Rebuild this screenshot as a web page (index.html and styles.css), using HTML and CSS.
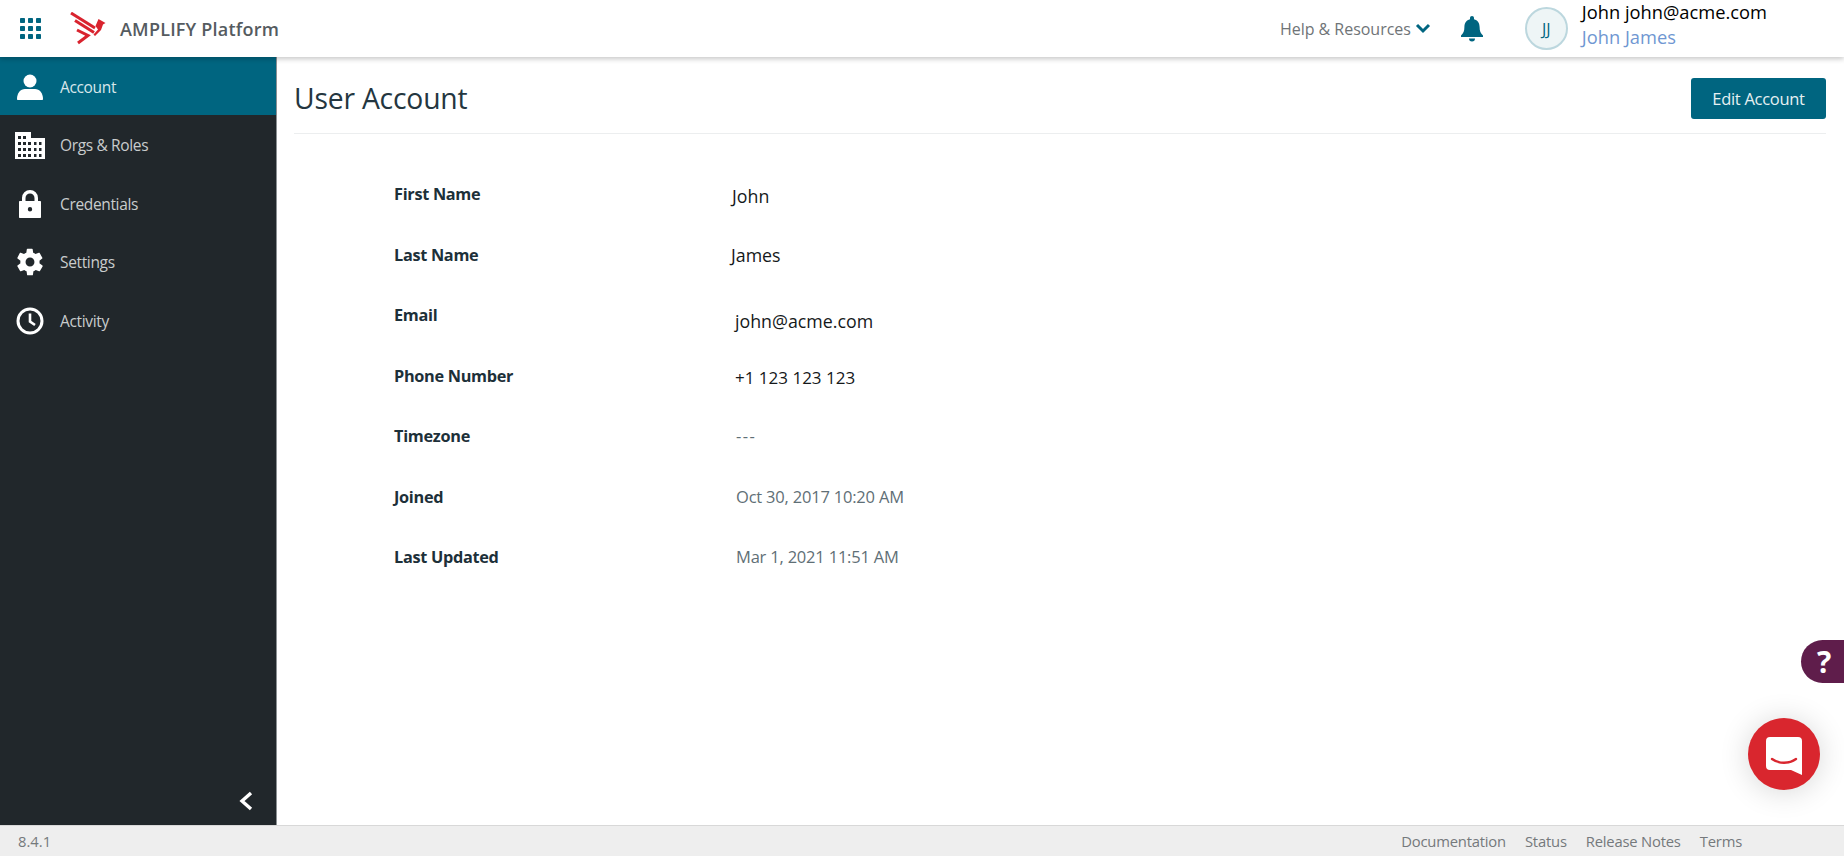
FILE: index.html
```html
<!DOCTYPE html>
<html lang="en">
<head>
<meta charset="utf-8">
<title>User Account</title>
<link rel="stylesheet" href="styles.css">
</head>
<body>
<div class="app">
  <header class="topbar">
    <div class="brand">
      <svg class="apps" viewBox="0 0 21 21"><g fill="#006580"><rect x="0" y="0" width="5" height="5" rx=".8"/><rect x="8" y="0" width="5" height="5" rx=".8"/><rect x="16" y="0" width="5" height="5" rx=".8"/><rect x="0" y="8" width="5" height="5" rx=".8"/><rect x="8" y="8" width="5" height="5" rx=".8"/><rect x="16" y="8" width="5" height="5" rx=".8"/><rect x="0" y="16" width="5" height="5" rx=".8"/><rect x="8" y="16" width="5" height="5" rx=".8"/><rect x="16" y="16" width="5" height="5" rx=".8"/></g></svg>
      <svg class="logo" viewBox="0 0 36 33"><g fill="none" stroke="#d9232e" stroke-width="3"><path d="M1 1 L25 16"/><path d="M5 8.500 L24 20.500"/><path d="M7 18 L18 23.500 L8 31"/></g><path fill="#d9232e" d="M25.500 14 L28.500 7 L35.500 11 L33 12.500 L31 18 L25 24 L23.500 22.500 L28 17.500 Z"/></svg>
      <span class="brand-name">AMPLIFY Platform</span>
    </div>
    <div class="top-right">
      <span class="help">Help &amp; Resources</span>
      <svg class="chev" viewBox="0 0 16 11"><path d="M2 2 L8 8 L14 2" fill="none" stroke="#006580" stroke-width="3"/></svg>
      <svg class="bell" viewBox="0 0 22 26"><path fill="#006580" d="M11 0c1.200 0 2 .8 2 2v1.200c3.600.9 5.600 3.900 5.600 7.800 0 4.200 1 6.300 3.400 8.500V21H0v-1.500C2.400 17.300 3.400 15.200 3.400 11c0-3.900 2-6.900 5.600-7.800V2c0-1.200.8-2 2-2zM8 22.500h6a3 3 0 0 1-6 0z"/></svg>
      <div class="avatar">JJ</div>
      <div class="user">
        <div class="user-mail">John john@acme.com</div>
        <div class="user-name">John James</div>
      </div>
    </div>
  </header>
  <div class="middle">
    <nav class="sidebar">
      <a class="nav-item active">
        <svg class="nav-icon" viewBox="0 0 28 28"><circle cx="14" cy="8" r="6.500" fill="#fff"/><path fill="#fff" d="M1 26c0-6 3.500-10 8-10h10c4.500 0 8 4 8 10 0 .6-.4 1-1 1H2c-.6 0-1-.4-1-1z"/></svg>
        <span>Account</span>
      </a>
      <a class="nav-item">
        <svg class="nav-icon" viewBox="0 0 30 28"><path fill="#fff" fill-rule="evenodd" d="M0 1h16v6h14v21H0zM3 5v3h3V5zm5 0v3h3V5zM3 11v3h3v-3zm5 0v3h3v-3zm5 0v3h3v-3zM3 17v3h3v-3zm5 0v3h3v-3zm5 0v3h3v-3zM3 23v3h3v-3zm5 0v3h3v-3zm5 0v3h3v-3zM19 11v3h2.500v-3zm5 0v3h2.500v-3zM19 17v3h2.500v-3zm5 0v3h2.500v-3zM19 23v3h2.500v-3zm5 0v3h2.500v-3z"/></svg>
        <span>Orgs &amp; Roles</span>
      </a>
      <a class="nav-item">
        <svg class="nav-icon" viewBox="0 0 28 28"><path fill="#fff" fill-rule="evenodd" d="M6 11V8a8 8 0 0 1 16 0v3h2c.6 0 1 .4 1 1v15c0 .6-.4 1-1 1H4c-.6 0-1-.4-1-1V12c0-.6.400-1 1-1zm3.500 0h9V8a4.500 4.500 0 0 0-9 0zM14 17a2.200 2.200 0 1 0 0 4.400A2.200 2.200 0 0 0 14 17z"/></svg>
        <span>Credentials</span>
      </a>
      <a class="nav-item">
        <svg class="nav-icon" viewBox="1.500 1 21 22"><path fill="#fff" d="M19.400 13c.1-.3.100-.7.100-1s0-.7-.1-1l2.200-1.700c.2-.2.300-.5.100-.7l-2.100-3.600c-.1-.2-.4-.3-.7-.2l-2.600 1c-.5-.4-1.100-.8-1.800-1L14.100 2c0-.3-.3-.5-.5-.5H10c-.3 0-.5.200-.5.500l-.4 2.700c-.7.300-1.200.6-1.800 1l-2.600-1c-.3-.1-.5 0-.7.200L2.100 8.600c-.1.200-.1.500.1.700L4.500 11c0 .3-.1.700-.1 1s0 .7.100 1l-2.300 1.700c-.2.200-.3.500-.1.700l2.100 3.600c.1.200.4.300.7.200l2.600-1c.5.400 1.100.8 1.800 1l.4 2.800c0 .3.200.5.500.5h3.600c.3 0 .5-.2.500-.5l.4-2.700c.7-.3 1.200-.6 1.800-1l2.600 1c.3.100.5 0 .7-.2l2.100-3.600c.1-.2.100-.5-.1-.7zM12 15.500a3.500 3.500 0 1 1 0-7 3.500 3.500 0 0 1 0 7z"/></svg>
        <span>Settings</span>
      </a>
      <a class="nav-item">
        <svg class="nav-icon" viewBox="0 0 28 28"><circle cx="14" cy="14" r="12" fill="none" stroke="#fff" stroke-width="3"/><path d="M14 6.500V14.500L19 18" fill="none" stroke="#fff" stroke-width="2.600"/></svg>
        <span>Activity</span>
      </a>
      <div class="collapse">
        <svg class="collapse-icon" viewBox="0 0 16 20"><path d="M13 2 L4 10 L13 18" fill="none" stroke="#fff" stroke-width="3.400"/></svg>
      </div>
    </nav>
    <main class="content">
      <div class="page-head">
        <h1>User Account</h1>
        <button class="edit-btn">Edit Account</button>
      </div>
      <dl class="fields">
        <div class="row"><dt>First Name</dt><dd class="val v-first">John</dd></div>
        <div class="row"><dt>Last Name</dt><dd class="val v-last">James</dd></div>
        <div class="row"><dt>Email</dt><dd class="val v-mail">john@acme.com</dd></div>
        <div class="row"><dt>Phone Number</dt><dd class="val v-phone">+1 123 123 123</dd></div>
        <div class="row"><dt>Timezone</dt><dd class="val muted v-tz">---</dd></div>
        <div class="row"><dt>Joined</dt><dd class="val muted">Oct 30, 2017 10:20 AM</dd></div>
        <div class="row"><dt>Last Updated</dt><dd class="val muted">Mar 1, 2021 11:51 AM</dd></div>
      </dl>
    </main>
  </div>
  <footer class="footer">
    <span class="version">8.4.1</span>
    <div class="links"><a>Documentation</a><a>Status</a><a>Release Notes</a><a>Terms</a></div>
  </footer>
</div>
<div class="help-tab">?</div>
<div class="chat">
  <svg class="chat-icon" viewBox="0 0 36 38"><path fill="#fff" d="M4 0h28a4 4 0 0 1 4 4v34l-11-5H4a4 4 0 0 1-4-4V4a4 4 0 0 1 4-4z"/><path d="M6 22c7 5 17 5 24 0" fill="none" stroke="#d9262e" stroke-width="2.400" stroke-linecap="round"/></svg>
</div>
</body>
</html>
```
FILE: styles.css
```css
* { box-sizing: border-box; }
html, body { margin: 0; height: 100%; overflow: hidden; }
body { font-family: "Open Sans", "Noto Sans", sans-serif; background: #fff; color: #1d2b33; }
.app { display: flex; flex-direction: column; height: 856px; }

.topbar { height: 57px; flex: none; display: flex; align-items: center; justify-content: space-between; background: #fff; box-shadow: 0 2px 5px rgba(0,0,0,.22); position: relative; z-index: 2; }
.brand { display: flex; align-items: center; padding-left: 20px; }
.apps { width: 21px; height: 21px; }
.logo { width: 36px; height: 33px; margin-left: 29px; }
.brand-name { margin-left: 14px; font-size: 18px; font-weight: 600; color: #555b60; letter-spacing: .2px; }
.top-right { display: flex; align-items: center; width: 564px; }
.help { font-size: 16px; color: #6f7477; letter-spacing: -.03px; }
.chev { width: 16px; height: 11px; margin-left: 4px; }
.bell { width: 22px; height: 26px; margin-left: 30px; }
.avatar { width: 43px; height: 43px; border-radius: 50%; border: 2px solid #bcd7de; background: #eef5f6; color: #006580; display: flex; align-items: center; justify-content: center; font-size: 16px; margin-left: 42px; }
.user { margin-left: 14px; margin-top: -8px; }
.user-mail { font-size: 18.300px; line-height: 24px; color: #000; }
.user-name { font-size: 18.300px; line-height: 25px; color: #6f97d2; }

.middle { flex: 1; display: flex; min-height: 0; }
.sidebar { width: 277px; flex: none; background: #21272b; display: flex; flex-direction: column; border-right: 1px solid #8b9093; }
.nav-item { height: 58.5px; flex: none; display: flex; align-items: center; padding: 2px 0 0 15px; color: #c9cccd; font-size: 15.500px; letter-spacing: -.35px; }
.nav-item.active { height: 58px; padding-top: 1px; background: #006580; color: #d8e7eb; }
.nav-icon { width: 30px; height: 28px; flex: none; margin-right: 15px; }
.collapse { margin-top: auto; display: flex; justify-content: flex-end; padding: 0 22px 14px 0; }
.collapse-icon { width: 16px; height: 20px; }

.content { flex: 1; min-width: 0; padding: 21px 18px 0 17px; }
.page-head { height: 56px; display: flex; justify-content: space-between; align-items: flex-start; border-bottom: 1px solid #eceeef; }
h1 { margin: 0; font-size: 28.300px; line-height: 41px; font-weight: 400; color: #243640; letter-spacing: -.2px; }
.edit-btn { width: 135px; height: 41px; border: 0; border-radius: 3px; background: #006580; color: #e6f0f2; font-family: inherit; font-size: 16.500px; letter-spacing: -.3px; padding: 0; }

.fields { margin: 45px 0 0 100px; }
.row { height: 60.5px; display: grid; grid-template-columns: 336px 1fr; align-items: start; margin: 0; }
dt { font-size: 16.300px; line-height: 30px; font-weight: 700; color: #1d3039; letter-spacing: -.3px; }
.val { margin: 0; font-size: 17.800px; line-height: 30px; color: #15181a; }
.v-first { margin-top: 2px; margin-left: 2px; }
.v-last { margin-left: 1px; }
.v-mail { margin-top: 6px; margin-left: 5px; }
.v-phone { margin-top: 2px; margin-left: 5px; font-size: 17px; }
.muted { margin-left: 6px; font-size: 16.500px; color: #5f6f76; letter-spacing: -.2px; }
.v-tz { letter-spacing: 1.500px; }

.footer { height: 31px; flex: none; display: flex; justify-content: space-between; align-items: center; background: #eeeeee; border-top: 1px solid #d8d8d8; padding: 0 102px 0 18px; font-size: 14.800px; color: #75797c; }
.links { display: flex; gap: 19px; letter-spacing: -.2px; }

.help-tab { position: absolute; left: 1801px; top: 640px; width: 43px; height: 43px; border-radius: 22px 0 0 22px; background: #5f1d4b; color: #fff; font-size: 30px; font-weight: 700; line-height: 43px; padding-left: 16px; }
.chat { position: absolute; left: 1748px; top: 718px; width: 72px; height: 72px; border-radius: 50%; background: #d9262e; box-shadow: 0 2px 30px rgba(0,0,0,.16); display: flex; align-items: center; justify-content: center; }
.chat-icon { width: 36px; height: 38px; margin-top: 3px; }
```
